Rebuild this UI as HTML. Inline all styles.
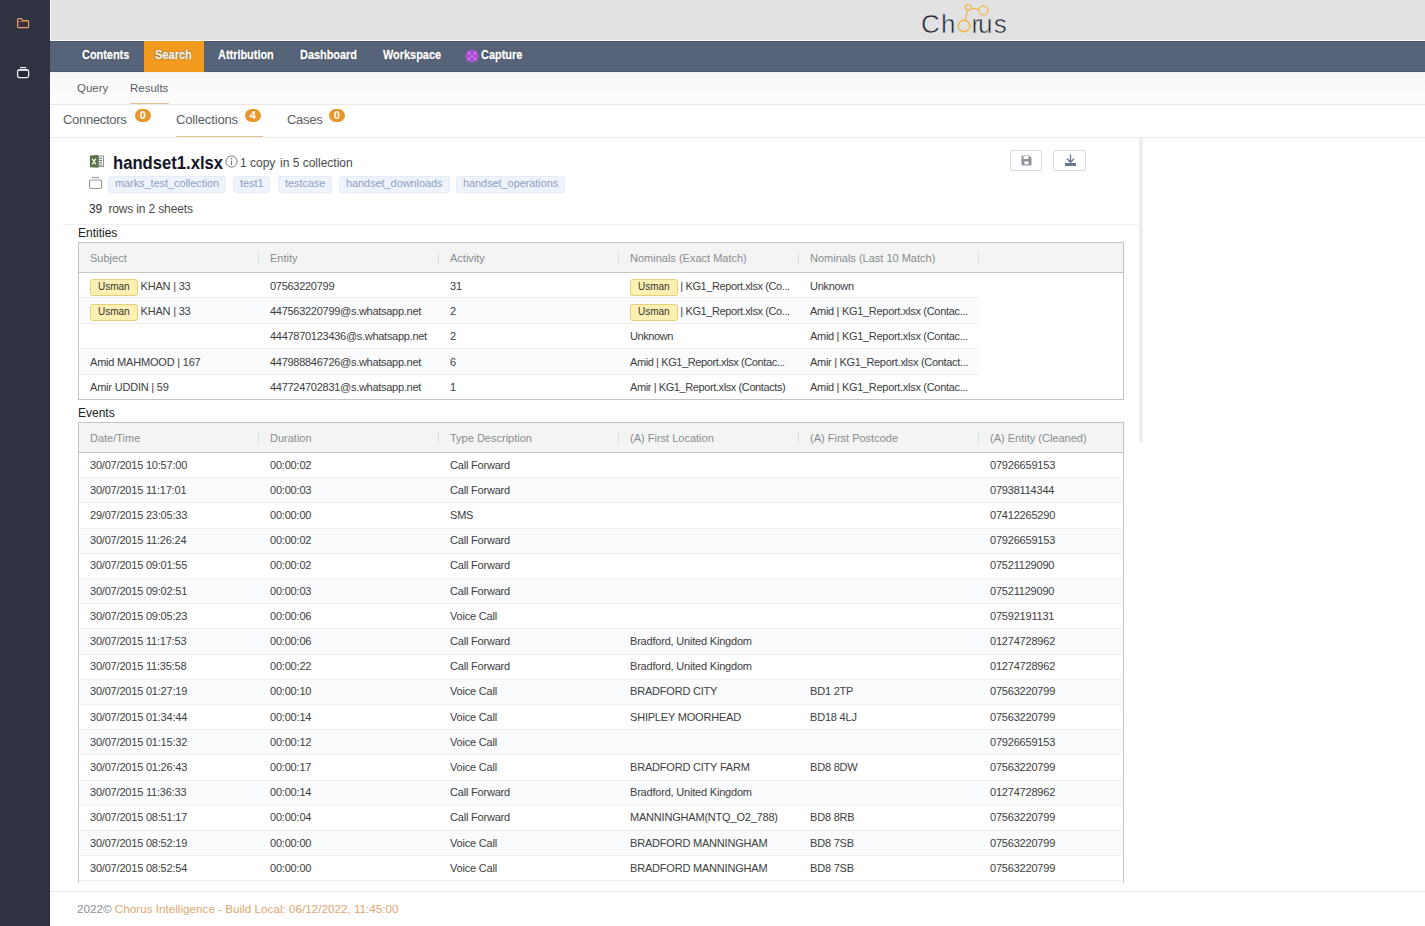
<!DOCTYPE html>
<html><head><meta charset="utf-8">
<style>
*{box-sizing:border-box;margin:0;padding:0}
html,body{width:1425px;height:926px;overflow:hidden;background:#fff;font-family:"Liberation Sans",sans-serif;color:#222}
.abs{position:absolute}
#side{position:absolute;left:0;top:0;width:50px;height:926px;background:#2f3241}
#hdr{position:absolute;left:50px;top:0;width:1375px;height:40px;background:#e2e2e2;border-left:1px solid #f4f4f4}
#hline{position:absolute;left:50px;top:40px;width:1375px;height:1px;background:#fbfbfb}
#nav{position:absolute;left:50px;top:41px;width:1375px;height:31px;background:#566379;border-top:1px solid #4b5568;border-bottom:1px solid #4e586b}
.it{position:absolute;top:0;white-space:nowrap;color:#fff;font-weight:bold;font-size:12px;line-height:13px;transform-origin:0 0;-webkit-text-stroke:0.35px currentColor;text-shadow:0 0 1px rgba(20,25,40,.9),0 0 2px rgba(20,25,40,.5)}
#sub{position:absolute;left:50px;top:72px;width:1375px;height:33px;background:linear-gradient(#eef1f4 0,#f8f9fa 2px,#fbfbfb 60%,#fdfdfd 100%);border-bottom:1px solid #e9e9e9}
#tabs{position:absolute;left:50px;top:105px;width:1375px;height:33px;background:#fff;border-bottom:1px solid #ededed}
.t{position:absolute;white-space:nowrap;color:#5a5e66;line-height:14px}
.badge{position:absolute;height:13px;width:15.5px;border-radius:7px;background:#e8952a;color:#fff;font-size:11px;font-weight:bold;text-align:center;line-height:13px}
.tbl{position:absolute;left:78px;width:1046px;border:1px solid #c2c4c5;background:#fff;overflow:hidden}
.th{position:absolute;left:0;top:0;width:1044px;height:30px;background:#f3f5f5;border-bottom:1px solid #c2c4c5}
.hc{position:absolute;top:9px;white-space:nowrap;font-size:11px;line-height:13px;color:#8a8c8e}
.dv{position:absolute;top:8px;width:1px;height:14px;background:#dedfe0}
.tr{position:absolute;left:0;border-bottom:1px solid #efefef}
.tc{position:absolute;top:6.5px;white-space:nowrap;font-size:11px;line-height:13px;color:#404040;letter-spacing:-0.2px}
.ub{display:inline-block;vertical-align:top;margin-top:-1px;margin-right:0;height:17.5px;line-height:14.5px;padding:0 7px 0 7px;font-size:10px;background:#fdf0b2;border:1px solid #e6d07a;border-radius:3px;color:#333;letter-spacing:0}
.tag{position:absolute;top:176px;height:17px;line-height:13.5px;padding:0 6px;background:#eff4fc;border:1px solid #e6ecf7;border-radius:3px;color:#8d9fc4;font-size:11px;letter-spacing:-0.08px;white-space:nowrap}
.btn{position:absolute;top:150px;height:21px;border:1px solid #dcdcdc;border-radius:2px;background:#fff}

.lg{top:9px;font-size:26px;line-height:30px;color:#1b2232;-webkit-text-stroke:0.55px #e2e2e2}

</style></head><body>
<div id="side">
  <svg class="abs" style="left:16px;top:17px" width="14" height="12" viewBox="0 0 14 12">
    <path d="M1.6 2.2 V9.6 Q1.6 10.6 2.6 10.6 H11.6 Q12.6 10.6 12.6 9.6 V4.6 Q12.6 3.6 11.6 3.6 H6.6 L5.6 1.6 H2.4 Q1.6 1.6 1.6 2.6 Z" fill="#3b2f3e" stroke="#e3a463" stroke-width="1.2"/>
    <path d="M2 4.6 H12.2" stroke="#9a6a45" stroke-width="1"/>
  </svg>
  <svg class="abs" style="left:16px;top:66px" width="14" height="13" viewBox="0 0 14 13">
    <path d="M4 1.6 H10.2" stroke="#e8ecf4" stroke-width="1.2"/>
    <rect x="1.6" y="3.6" width="11" height="8" rx="1.8" fill="#262a38" stroke="#e8ecf4" stroke-width="1.3"/>
    <path d="M2.5 4.4 H11.7" stroke="#e8ecf4" stroke-width="1"/>
  </svg>
</div>
<div id="hdr">
  <div class="abs lg" style="left:870px">C</div>
  <div class="abs lg" style="left:890px">h</div>
  <div class="abs lg" style="left:920.5px">r</div>
  <div class="abs lg" style="left:927px">u</div>
  <div class="abs lg" style="left:942.8px">s</div>
  <svg class="abs" style="left:895px;top:0" width="45" height="40" viewBox="0 0 45 40">
    <circle cx="18" cy="26" r="5.8" fill="none" stroke="#efb548" stroke-width="1.4"/>
    <circle cx="22.2" cy="7.3" r="2.9" fill="none" stroke="#efb548" stroke-width="1.3"/>
    <circle cx="37.4" cy="10.4" r="4.5" fill="none" stroke="#efb548" stroke-width="1.3"/>
    <path d="M19.4 19.7 L21.5 10.5 M25.4 8 L32.6 9.4" stroke="#efb548" stroke-width="1.2"/>
  </svg>
</div>
<div id="hline"></div>
<div id="nav">
  <div class="it" style="left:32px;top:7px;transform:scaleX(0.91)">Contents</div>
  <div class="abs" style="left:94px;top:-1px;width:60px;height:31px;background:#f39b1e"></div>
  <div class="it" style="left:105px;top:7px;transform:scaleX(0.92);color:#fff6e6">Search</div>
  <div class="it" style="left:168px;top:7px;transform:scaleX(0.91)">Attribution</div>
  <div class="it" style="left:250px;top:7px;transform:scaleX(0.91)">Dashboard</div>
  <div class="it" style="left:333px;top:7px;transform:scaleX(0.91)">Workspace</div>
  <svg class="abs" style="left:414.5px;top:6.5px" width="14" height="14" viewBox="0 0 14 14">
    <circle cx="7" cy="7" r="6.6" fill="#ac4fd6"/>
    <circle cx="4" cy="4" r="1.2" fill="#c68ae6"/><circle cx="10" cy="4" r="1.2" fill="#c68ae6"/>
    <circle cx="4" cy="10" r="1.2" fill="#c68ae6"/><circle cx="10" cy="10" r="1.2" fill="#c68ae6"/>
    <circle cx="7" cy="7.2" r="1" fill="#e090ff"/>
  </svg>
  <div class="it" style="left:431px;top:7px;transform:scaleX(0.91)">Capture</div>
</div>
<div id="sub">
  <div class="t" style="left:27px;top:9px;font-size:11.5px">Query</div>
  <div class="t" style="left:80px;top:9px;font-size:11.5px">Results</div>
  <div class="abs" style="left:80px;top:30.5px;width:39px;height:1.5px;background:#dfc390"></div>
</div>
<div id="tabs">
  <div class="t" style="left:13px;top:8px;font-size:13px;letter-spacing:-0.3px">Connectors</div>
  <div class="badge" style="left:85px;top:4px">0</div>
  <div class="t" style="left:126px;top:8px;font-size:13px;letter-spacing:-0.15px">Collections</div>
  <div class="badge" style="left:195px;top:4px">4</div>
  <div class="abs" style="left:126px;top:30.5px;width:87px;height:1.5px;background:#dfc390"></div>
  <div class="t" style="left:237px;top:8px;font-size:13px;letter-spacing:-0.3px">Cases</div>
  <div class="badge" style="left:279px;top:4px">0</div>
</div>
<!-- file header -->
<svg class="abs" style="left:89px;top:154px" width="16" height="15" viewBox="0 0 16 15">
  <rect x="9.6" y="2.1" width="5" height="10.6" fill="#fff" stroke="#7a8090" stroke-width="0.9"/>
  <path d="M10.3 4.3 H13 M10.3 6.6 H13 M10.3 8.9 H13 M10.3 11.1 H13" stroke="#5a6070" stroke-width="1"/>
  <path d="M0.9 1.4 L9.4 0.9 V13.7 L0.9 13.3 Z" fill="#5b7047"/>
  <path d="M3.2 4.6 L6.9 10.4 M6.9 4.6 L3.2 10.4" stroke="#eef0d8" stroke-width="1.3"/>
</svg>
<div class="abs" style="left:113px;top:152px;font-size:18px;line-height:22px;font-weight:bold;color:#13172a;white-space:nowrap;transform:scaleX(0.925);transform-origin:0 0">handset1.xlsx</div>
<svg class="abs" style="left:225px;top:155px" width="13" height="13" viewBox="0 0 13 13">
  <circle cx="6.5" cy="6.5" r="5.6" fill="none" stroke="#777" stroke-width="1"/>
  <path d="M6.5 5.5 V10" stroke="#777" stroke-width="1.2"/>
  <circle cx="6.5" cy="3.6" r="0.8" fill="#777"/>
</svg>
<div class="abs" style="left:240px;top:155.5px;font-size:12px;line-height:15px;color:#4a4a4a;white-space:nowrap">1 copy</div>
<div class="abs" style="left:280px;top:155.5px;font-size:12px;line-height:15px;color:#4a4a4a;white-space:nowrap">in 5 collection</div>
<svg class="abs" style="left:88px;top:176px" width="15" height="14" viewBox="0 0 15 14">
  <path d="M4 1.5 H11" stroke="#999" stroke-width="1.1"/>
  <rect x="1.5" y="4" width="12" height="8.5" rx="1.5" fill="none" stroke="#999" stroke-width="1.2"/>
</svg>
<div class="tag" style="left:108px">marks_test_collection</div>
<div class="tag" style="left:233px">test1</div>
<div class="tag" style="left:278px">testcase</div>
<div class="tag" style="left:339px">handset_downloads</div>
<div class="tag" style="left:456px">handset_operations</div>
<div class="abs" style="left:89px;top:201.5px;font-size:12px;line-height:15px;color:#2a2a2a;white-space:nowrap;letter-spacing:-0.15px">39 &nbsp;<span style="color:#4a4a4a">rows in 2 sheets</span></div>
<div class="btn" style="left:1010px;width:32px">
  <svg class="abs" style="left:10px;top:4px" width="11" height="11" viewBox="0 0 11 11">
    <path d="M0.5 1.5 Q0.5 0.5 1.5 0.5 H8 L10.5 3 V9.5 Q10.5 10.5 9.5 10.5 H1.5 Q0.5 10.5 0.5 9.5 Z" fill="#8e9199"/>
    <rect x="2.5" y="1" width="5" height="3" fill="#fff"/>
    <rect x="3.5" y="6.3" width="4" height="3" fill="#fff"/>
  </svg>
</div>
<div class="btn" style="left:1053px;width:33px">
  <svg class="abs" style="left:10px;top:3px" width="13" height="13" viewBox="0 0 13 13">
    <path d="M6.5 0.5 V8 M3 4.8 L6.5 8.3 L10 4.8" fill="none" stroke="#6a7390" stroke-width="1.3"/>
    <rect x="1" y="9" width="11" height="3" fill="#6a7390"/>
  </svg>
</div>
<div class="abs" style="left:62px;top:224px;width:1077px;height:1px;background:#efefef"></div>
<div class="abs" style="left:1139px;top:138px;width:4px;height:304px;background:#ededed"></div>
<div class="abs" style="left:78px;top:226px;font-size:12px;line-height:14px;color:#222;white-space:nowrap">Entities</div>
<div class="abs" style="left:0;top:242px;width:1140px;height:160px"><div class="tbl" style="top:0px;height:158.0px">
<div class="th">
<div class="hc" style="left:11px">Subject</div>
<div class="dv" style="left:179px"></div>
<div class="hc" style="left:191px">Entity</div>
<div class="dv" style="left:359px"></div>
<div class="hc" style="left:371px">Activity</div>
<div class="dv" style="left:539px"></div>
<div class="hc" style="left:551px">Nominals (Exact Match)</div>
<div class="dv" style="left:719px"></div>
<div class="hc" style="left:731px">Nominals (Last 10 Match)</div>
<div class="dv" style="left:899px"></div>
</div>
<div class="tr" style="top:30.00px;height:25.40px;width:900px;background:#fff">
<div class="tc" style="left:11px"><span class="ub">Usman</span> KHAN | 33</div>
<div class="tc" style="left:191px;letter-spacing:-0.28px">07563220799</div>
<div class="tc" style="left:371px">31</div>
<div class="tc" style="left:551px;letter-spacing:-0.4px"><span class="ub">Usman</span> | KG1_Report.xlsx (Co...</div>
<div class="tc" style="left:731px;letter-spacing:-0.3px">Unknown</div>
</div>
<div class="tr" style="top:55.40px;height:25.40px;width:900px;background:#f9fbfd">
<div class="tc" style="left:11px"><span class="ub">Usman</span> KHAN | 33</div>
<div class="tc" style="left:191px;letter-spacing:-0.28px">447563220799@s.whatsapp.net</div>
<div class="tc" style="left:371px">2</div>
<div class="tc" style="left:551px;letter-spacing:-0.4px"><span class="ub">Usman</span> | KG1_Report.xlsx (Co...</div>
<div class="tc" style="left:731px;letter-spacing:-0.3px">Amid | KG1_Report.xlsx (Contac...</div>
</div>
<div class="tr" style="top:80.80px;height:25.40px;width:900px;background:#fff">
<div class="tc" style="left:191px;letter-spacing:-0.28px">4447870123436@s.whatsapp.net</div>
<div class="tc" style="left:371px">2</div>
<div class="tc" style="left:551px;letter-spacing:-0.4px">Unknown</div>
<div class="tc" style="left:731px;letter-spacing:-0.3px">Amid | KG1_Report.xlsx (Contac...</div>
</div>
<div class="tr" style="top:106.20px;height:25.40px;width:900px;background:#f9fbfd">
<div class="tc" style="left:11px">Amid MAHMOOD | 167</div>
<div class="tc" style="left:191px;letter-spacing:-0.28px">447988846726@s.whatsapp.net</div>
<div class="tc" style="left:371px">6</div>
<div class="tc" style="left:551px;letter-spacing:-0.4px">Amid | KG1_Report.xlsx (Contac...</div>
<div class="tc" style="left:731px;letter-spacing:-0.3px">Amir | KG1_Report.xlsx (Contact...</div>
</div>
<div class="tr" style="top:131.60px;height:25.40px;width:900px;background:#fff">
<div class="tc" style="left:11px">Amir UDDIN | 59</div>
<div class="tc" style="left:191px;letter-spacing:-0.28px">447724702831@s.whatsapp.net</div>
<div class="tc" style="left:371px">1</div>
<div class="tc" style="left:551px;letter-spacing:-0.4px">Amir | KG1_Report.xlsx (Contacts)</div>
<div class="tc" style="left:731px;letter-spacing:-0.3px">Amid | KG1_Report.xlsx (Contac...</div>
</div>
</div></div>
<div class="abs" style="left:78px;top:405.5px;font-size:12px;line-height:14px;color:#222;white-space:nowrap">Events</div>
<div class="abs" style="left:0;top:422px;width:1140px;height:461px;overflow:hidden"><div class="tbl" style="top:0px;height:484.59999999999997px">
<div class="th">
<div class="hc" style="left:11px">Date/Time</div>
<div class="dv" style="left:179px"></div>
<div class="hc" style="left:191px">Duration</div>
<div class="dv" style="left:359px"></div>
<div class="hc" style="left:371px">Type Description</div>
<div class="dv" style="left:539px"></div>
<div class="hc" style="left:551px">(A) First Location</div>
<div class="dv" style="left:719px"></div>
<div class="hc" style="left:731px">(A) First Postcode</div>
<div class="dv" style="left:899px"></div>
<div class="hc" style="left:911px">(A) Entity (Cleaned)</div>
</div>
<div class="tr" style="top:30.00px;height:25.20px;width:1042px;background:#fff">
<div class="tc" style="left:11px;top:5.6px">30/07/2015 10:57:00</div>
<div class="tc" style="left:191px;top:5.6px">00:00:02</div>
<div class="tc" style="left:371px;top:5.6px">Call Forward</div>
<div class="tc" style="left:911px;top:5.6px">07926659153</div>
</div>
<div class="tr" style="top:55.20px;height:25.20px;width:1042px;background:#f9fbfd">
<div class="tc" style="left:11px;top:5.6px">30/07/2015 11:17:01</div>
<div class="tc" style="left:191px;top:5.6px">00:00:03</div>
<div class="tc" style="left:371px;top:5.6px">Call Forward</div>
<div class="tc" style="left:911px;top:5.6px">07938114344</div>
</div>
<div class="tr" style="top:80.40px;height:25.20px;width:1042px;background:#fff">
<div class="tc" style="left:11px;top:5.6px">29/07/2015 23:05:33</div>
<div class="tc" style="left:191px;top:5.6px">00:00:00</div>
<div class="tc" style="left:371px;top:5.6px">SMS</div>
<div class="tc" style="left:911px;top:5.6px">07412265290</div>
</div>
<div class="tr" style="top:105.60px;height:25.20px;width:1042px;background:#f9fbfd">
<div class="tc" style="left:11px;top:5.6px">30/07/2015 11:26:24</div>
<div class="tc" style="left:191px;top:5.6px">00:00:02</div>
<div class="tc" style="left:371px;top:5.6px">Call Forward</div>
<div class="tc" style="left:911px;top:5.6px">07926659153</div>
</div>
<div class="tr" style="top:130.80px;height:25.20px;width:1042px;background:#fff">
<div class="tc" style="left:11px;top:5.6px">30/07/2015 09:01:55</div>
<div class="tc" style="left:191px;top:5.6px">00:00:02</div>
<div class="tc" style="left:371px;top:5.6px">Call Forward</div>
<div class="tc" style="left:911px;top:5.6px">07521129090</div>
</div>
<div class="tr" style="top:156.00px;height:25.20px;width:1042px;background:#f9fbfd">
<div class="tc" style="left:11px;top:5.6px">30/07/2015 09:02:51</div>
<div class="tc" style="left:191px;top:5.6px">00:00:03</div>
<div class="tc" style="left:371px;top:5.6px">Call Forward</div>
<div class="tc" style="left:911px;top:5.6px">07521129090</div>
</div>
<div class="tr" style="top:181.20px;height:25.20px;width:1042px;background:#fff">
<div class="tc" style="left:11px;top:5.6px">30/07/2015 09:05:23</div>
<div class="tc" style="left:191px;top:5.6px">00:00:06</div>
<div class="tc" style="left:371px;top:5.6px">Voice Call</div>
<div class="tc" style="left:911px;top:5.6px">07592191131</div>
</div>
<div class="tr" style="top:206.40px;height:25.20px;width:1042px;background:#f9fbfd">
<div class="tc" style="left:11px;top:5.6px">30/07/2015 11:17:53</div>
<div class="tc" style="left:191px;top:5.6px">00:00:06</div>
<div class="tc" style="left:371px;top:5.6px">Call Forward</div>
<div class="tc" style="left:551px;top:5.6px">Bradford, United Kingdom</div>
<div class="tc" style="left:911px;top:5.6px">01274728962</div>
</div>
<div class="tr" style="top:231.60px;height:25.20px;width:1042px;background:#fff">
<div class="tc" style="left:11px;top:5.6px">30/07/2015 11:35:58</div>
<div class="tc" style="left:191px;top:5.6px">00:00:22</div>
<div class="tc" style="left:371px;top:5.6px">Call Forward</div>
<div class="tc" style="left:551px;top:5.6px">Bradford, United Kingdom</div>
<div class="tc" style="left:911px;top:5.6px">01274728962</div>
</div>
<div class="tr" style="top:256.80px;height:25.20px;width:1042px;background:#f9fbfd">
<div class="tc" style="left:11px;top:5.6px">30/07/2015 01:27:19</div>
<div class="tc" style="left:191px;top:5.6px">00:00:10</div>
<div class="tc" style="left:371px;top:5.6px">Voice Call</div>
<div class="tc" style="left:551px;top:5.6px">BRADFORD CITY</div>
<div class="tc" style="left:731px;top:5.6px">BD1 2TP</div>
<div class="tc" style="left:911px;top:5.6px">07563220799</div>
</div>
<div class="tr" style="top:282.00px;height:25.20px;width:1042px;background:#fff">
<div class="tc" style="left:11px;top:5.6px">30/07/2015 01:34:44</div>
<div class="tc" style="left:191px;top:5.6px">00:00:14</div>
<div class="tc" style="left:371px;top:5.6px">Voice Call</div>
<div class="tc" style="left:551px;top:5.6px">SHIPLEY MOORHEAD</div>
<div class="tc" style="left:731px;top:5.6px">BD18 4LJ</div>
<div class="tc" style="left:911px;top:5.6px">07563220799</div>
</div>
<div class="tr" style="top:307.20px;height:25.20px;width:1042px;background:#f9fbfd">
<div class="tc" style="left:11px;top:5.6px">30/07/2015 01:15:32</div>
<div class="tc" style="left:191px;top:5.6px">00:00:12</div>
<div class="tc" style="left:371px;top:5.6px">Voice Call</div>
<div class="tc" style="left:911px;top:5.6px">07926659153</div>
</div>
<div class="tr" style="top:332.40px;height:25.20px;width:1042px;background:#fff">
<div class="tc" style="left:11px;top:5.6px">30/07/2015 01:26:43</div>
<div class="tc" style="left:191px;top:5.6px">00:00:17</div>
<div class="tc" style="left:371px;top:5.6px">Voice Call</div>
<div class="tc" style="left:551px;top:5.6px">BRADFORD CITY FARM</div>
<div class="tc" style="left:731px;top:5.6px">BD8 8DW</div>
<div class="tc" style="left:911px;top:5.6px">07563220799</div>
</div>
<div class="tr" style="top:357.60px;height:25.20px;width:1042px;background:#f9fbfd">
<div class="tc" style="left:11px;top:5.6px">30/07/2015 11:36:33</div>
<div class="tc" style="left:191px;top:5.6px">00:00:14</div>
<div class="tc" style="left:371px;top:5.6px">Call Forward</div>
<div class="tc" style="left:551px;top:5.6px">Bradford, United Kingdom</div>
<div class="tc" style="left:911px;top:5.6px">01274728962</div>
</div>
<div class="tr" style="top:382.80px;height:25.20px;width:1042px;background:#fff">
<div class="tc" style="left:11px;top:5.6px">30/07/2015 08:51:17</div>
<div class="tc" style="left:191px;top:5.6px">00:00:04</div>
<div class="tc" style="left:371px;top:5.6px">Call Forward</div>
<div class="tc" style="left:551px;top:5.6px">MANNINGHAM(NTQ_O2_788)</div>
<div class="tc" style="left:731px;top:5.6px">BD8 8RB</div>
<div class="tc" style="left:911px;top:5.6px">07563220799</div>
</div>
<div class="tr" style="top:408.00px;height:25.20px;width:1042px;background:#f9fbfd">
<div class="tc" style="left:11px;top:5.6px">30/07/2015 08:52:19</div>
<div class="tc" style="left:191px;top:5.6px">00:00:00</div>
<div class="tc" style="left:371px;top:5.6px">Voice Call</div>
<div class="tc" style="left:551px;top:5.6px">BRADFORD MANNINGHAM</div>
<div class="tc" style="left:731px;top:5.6px">BD8 7SB</div>
<div class="tc" style="left:911px;top:5.6px">07563220799</div>
</div>
<div class="tr" style="top:433.20px;height:25.20px;width:1042px;background:#fff">
<div class="tc" style="left:11px;top:5.6px">30/07/2015 08:52:54</div>
<div class="tc" style="left:191px;top:5.6px">00:00:00</div>
<div class="tc" style="left:371px;top:5.6px">Voice Call</div>
<div class="tc" style="left:551px;top:5.6px">BRADFORD MANNINGHAM</div>
<div class="tc" style="left:731px;top:5.6px">BD8 7SB</div>
<div class="tc" style="left:911px;top:5.6px">07563220799</div>
</div>
<div class="tr" style="top:458.40px;height:25.20px;width:1042px;background:#f9fbfd">
<div class="tc" style="left:11px;top:5.6px">30/07/2015 08:53:10</div>
<div class="tc" style="left:191px;top:5.6px">00:00:00</div>
<div class="tc" style="left:371px;top:5.6px">Voice Call</div>
<div class="tc" style="left:551px;top:5.6px">BRADFORD MANNINGHAM</div>
<div class="tc" style="left:731px;top:5.6px">BD8 7SB</div>
<div class="tc" style="left:911px;top:5.6px">07563220799</div>
</div>
</div></div>
<div class="abs" style="left:50px;top:891px;width:1375px;height:1px;background:#ebebeb"></div>
<div class="abs" style="left:77px;top:902px;font-size:11.7px;line-height:14px;color:#8c909a;white-space:nowrap">2022© <span style="color:#dea672">Chorus Intelligence - Build Local: 06/12/2022, 11:45:00</span></div>

</body></html>
